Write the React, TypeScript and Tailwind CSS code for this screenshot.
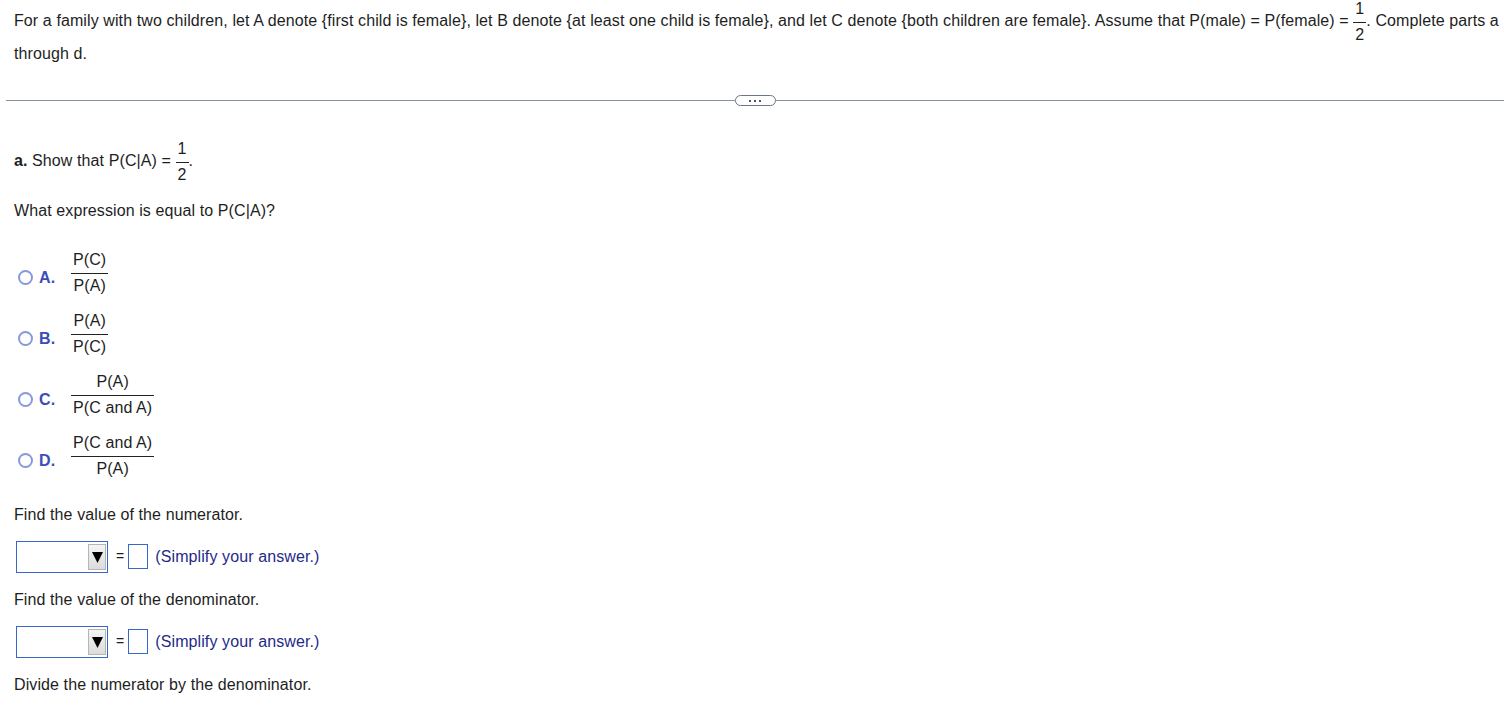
import React from 'react';

const Frac = ({ top, bottom, className = '' }: { top: string; bottom: string; className?: string }) => (
  <span className={`inline-flex flex-col items-center align-middle ${className}`}>
    <span className="leading-[18px] pb-[4px] px-[2px] whitespace-nowrap">{top}</span>
    <span className="self-stretch h-px bg-[#222]" />
    <span className="leading-[18px] pt-[3px] px-[2px] whitespace-nowrap">{bottom}</span>
  </span>
);

const Option = ({ letter, top, bottom }: { letter: string; top: string; bottom: string }) => (
  <div className="flex items-center h-[41px]">
    <div className="flex items-center mt-[9px]">
      <span className="ml-[4px] w-[15px] h-[15px] rounded-full border-2 border-[#8799dd] bg-white" />
      <span className="ml-[6px] w-[32px] font-bold text-[#3a4db8]">{letter}.</span>
    </div>
    <Frac top={top} bottom={bottom} />
  </div>
);

const AnswerRow = () => (
  <div className="flex items-center h-[32px]">
    <div className="ml-[2px] w-[92px] h-[32px] border border-[#3767c8] bg-white flex justify-end items-center pr-[1px]">
      <div className="w-[18px] h-[26px] bg-gradient-to-b from-[#f4f4f4] to-[#dcdcdc] border border-[#b5b5b5] flex items-center justify-center">
        <svg width="11" height="12" viewBox="0 0 11 12">
          <polygon points="0,1 11,1 5.5,12" fill="#000" />
        </svg>
      </div>
    </div>
    <span className="ml-[8px] text-[14px]">=</span>
    <div className="ml-[4px] w-[20px] h-[25px] border border-[#3767c8] bg-white" />
    <span className="ml-[7px] text-[#1f2a8a]">(Simplify your answer.)</span>
  </div>
);

export default function App() {
  return (
    <div className="w-[1504px] min-h-[706px] bg-white text-[#1e1e1e] text-[16px] tracking-[0.1px] font-['Liberation_Sans',Arial,sans-serif]">
      <p className="pl-[14px] pt-[4px] leading-[33px]">
        For a family with two children, let A denote {'{'}first child is female{'}'}, let B denote {'{'}at least one child is female{'}'}, and let C denote {'{'}both children are female{'}'}. Assume that P(male) = P(female) ={' '}
        <Frac top="1" bottom="2" className="-my-[12px]" />. Complete parts a through d.
      </p>

      <div className="mt-[25px] ml-[6px] flex items-center h-[11px]">
        <div className="flex-1 h-px bg-[#8793a0]" />
        <div className="w-[41px] h-[11px] rounded-full border border-[#6b7684] bg-white flex items-center justify-center gap-[3px]">
          <span className="w-[2px] h-[2px] bg-[#4b5563]" />
          <span className="w-[2px] h-[2px] bg-[#4b5563]" />
          <span className="w-[2px] h-[2px] bg-[#4b5563]" />
        </div>
        <div className="flex-1 h-px bg-[#8793a0]" />
      </div>

      <div className="pl-[14px]">
        <p className="mt-[45px] leading-[20px]">
          <span className="font-bold">a.</span> Show that P(C|A) = <Frac top="1" bottom="2" className="-my-[12px]" />.
        </p>
        <p className="mt-[29px] leading-[20px]">What expression is equal to P(C|A)?</p>

        <div className="mt-[32px] flex flex-col gap-[20px]">
          <Option letter="A" top="P(C)" bottom="P(A)" />
          <Option letter="B" top="P(A)" bottom="P(C)" />
          <Option letter="C" top="P(A)" bottom="P(C and A)" />
          <Option letter="D" top="P(C and A)" bottom="P(A)" />
        </div>

        <p className="mt-[28px] leading-[20px]">Find the value of the numerator.</p>
        <div className="mt-[16px]">
          <AnswerRow />
        </div>
        <p className="mt-[17px] leading-[20px]">Find the value of the denominator.</p>
        <div className="mt-[16px]">
          <AnswerRow />
        </div>
        <p className="mt-[17px] leading-[20px]">Divide the numerator by the denominator.</p>
      </div>
    </div>
  );
}
